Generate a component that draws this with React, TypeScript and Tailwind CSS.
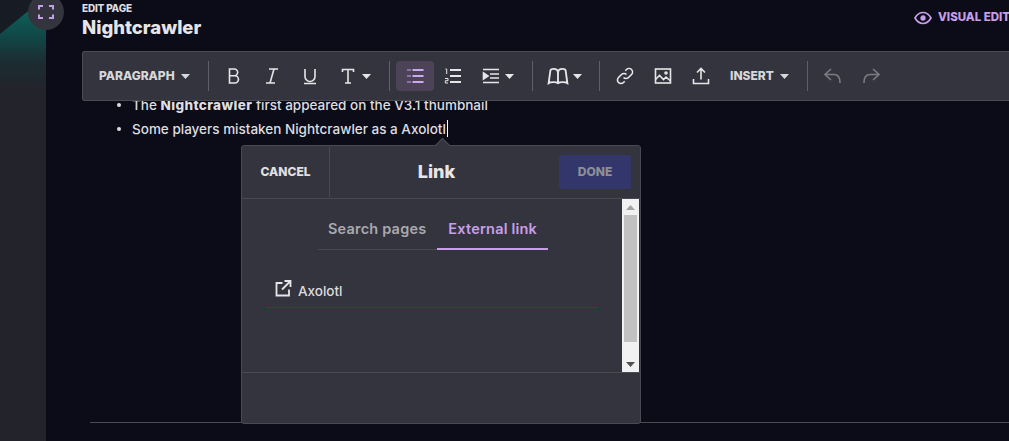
import type { ReactNode } from 'react'

function Caret({ className = '' }: { className?: string }) {
  return (
    <svg width="9" height="5" viewBox="0 0 9 5" className={className}>
      <path d="M0 0h9L4.500 5z" fill="currentColor" />
    </svg>
  )
}

function Divider() {
  return <div className="ml-[18px] mr-[6px] h-[30px] w-px shrink-0 bg-[#5f5f68]" />
}

function ToolIcon({ children, active = false }: { children: ReactNode; active?: boolean }) {
  return (
    <div className={active ? 'flex h-[30px] w-[38px] shrink-0 items-center justify-center rounded bg-[#4c4359] text-[#cfa6f0]' : 'flex h-[30px] w-[38px] shrink-0 items-center justify-center text-[#e6e6e8]'}>
      {children}
    </div>
  )
}

function Stroke({ children, size = 20 }: { children: ReactNode; size?: number }) {
  return (
    <svg width={size} height={size} viewBox="0 0 20 20" fill="none" stroke="currentColor" strokeWidth="1.600">
      {children}
    </svg>
  )
}

function Toolbar() {
  return (
    <div className="relative z-10 flex h-[50px] items-center rounded-l-[3px] border border-r-0 border-[#4a4a53] bg-[#34343e] pl-[16px] text-[#e6e6e8]">
      <div className="flex w-[91px] shrink-0 items-center justify-between text-[12px] font-extrabold text-[#d8d8da]">
        PARAGRAPH <Caret />
      </div>
      <Divider />
      <ToolIcon>
        <Stroke><path d="M5.500 3h4.800a3.200 3.200 0 0 1 0 6.700H5.500zM5.500 9.700h5.300a3.600 3.600 0 0 1 0 7.300H5.500z" /></Stroke>
      </ToolIcon>
      <ToolIcon>
        <Stroke><path d="M7 3h9M4 17h9M12 3L8 17" /></Stroke>
      </ToolIcon>
      <ToolIcon>
        <Stroke><path d="M5 3v7.500a5 5 0 0 0 10 0V3M4 17.500h12" /></Stroke>
      </ToolIcon>
      <ToolIcon>
        <Stroke><path d="M4.500 6V3.500h11V6M10 3.500V17M7 17h6" /></Stroke>
      </ToolIcon>
      <Caret className="-ml-[5px]" />
      <Divider />
      <ToolIcon active>
        <Stroke>
          <path d="M7.500 4h11M7.500 10h11M7.500 16h11" strokeWidth="2" />
          <path d="M2 4h4M2 10h4M2 16h4" strokeWidth="1" />
        </Stroke>
      </ToolIcon>
      <ToolIcon>
        <Stroke>
          <path d="M7 4h11M7 10h11M7 16h11" strokeWidth="2" />
          <path d="M2.500 3h1.200v5" strokeWidth="1" />
          <path d="M2 12.500h3v2.200H2.300V17H5" strokeWidth="1" />
        </Stroke>
      </ToolIcon>
      <ToolIcon>
        <Stroke>
          <path d="M2 3.500h16M9 8h9M9 12h9M2 16.500h16" />
          <path d="M2.500 7l4.500 3-4.500 3z" fill="currentColor" />
        </Stroke>
      </ToolIcon>
      <Caret className="-ml-[5px]" />
      <Divider />
      <div className="flex h-[30px] shrink-0 items-center gap-[4px] pl-[8px]">
        <Stroke size={22}>
          <path strokeWidth="1.700" d="M10 7C10 4.500 8 3.500 6 3.500S3 4.500 3 5.500L1.500 16.500C3 15.500 8 15 10 16.500 12 15 17 15.500 18.500 16.500L17 5.500C17 4.500 16 3.500 14 3.500S10 4.500 10 7V16.500" />
        </Stroke>
        <Caret />
      </div>
      <div className="ml-[17px] mr-[6px] h-[30px] w-px shrink-0 bg-[#5f5f68]" />
      <ToolIcon>
        <Stroke>
          <path d="M8.500 11.500a3.500 3.500 0 0 0 5 0l3-3a3.500 3.500 0 0 0-5-5l-1.200 1.200" />
          <path d="M11.500 8.500a3.500 3.500 0 0 0-5 0l-3 3a3.500 3.500 0 0 0 5 5l1.200-1.200" />
        </Stroke>
      </ToolIcon>
      <ToolIcon>
        <Stroke>
          <rect x="2.500" y="3" width="15" height="14" />
          <path d="M2.500 13.500l4-4 4 4 2.500-2.500 4.500 4" />
          <circle cx="13" cy="7" r="1" />
        </Stroke>
      </ToolIcon>
      <ToolIcon>
        <Stroke>
          <path d="M10 13.500V3M6 6.500L10 2.500l4 4M2.500 13v4.500h15V13" />
        </Stroke>
      </ToolIcon>
      <div className="ml-[10px] flex w-[59px] shrink-0 items-center justify-between text-[12px] font-extrabold text-[#d8d8da]">
        INSERT <Caret />
      </div>
      <Divider />
      <div className="flex h-[30px] w-[38px] shrink-0 items-center justify-center text-[#7b7b82]">
        <Stroke><path d="M8 3L2 8.500 8 14M2 8.500H11c4 0 6 3 6 8.500" /></Stroke>
      </div>
      <div className="flex h-[30px] w-[38px] shrink-0 items-center justify-center text-[#7b7b82]">
        <Stroke><path d="M12 3L18 8.500 12 14M18 8.500H9c-4 0-6 3-6 8.500" /></Stroke>
      </div>
    </div>
  )
}

function LinkDialog() {
  return (
    <div className="absolute left-[241px] top-[145px] flex h-[279px] w-[400px] flex-col rounded-[3px] border border-[#4a4a53] bg-[#34343e]">
      <div className="absolute -top-[6px] left-[195px] h-[11px] w-[11px] rotate-45 border-l border-t border-[#4a4a53] bg-[#34343e]" />
      <div className="relative flex h-[53px] items-center border-b border-[#4a4a53]">
        <div className="flex h-[50px] w-[88px] items-center justify-center border-r border-[#4a4a53] text-[12px] font-extrabold text-[#e0e0e2]">
          CANCEL
        </div>
        <div className="-mt-px flex-1 pr-[16px] text-center text-[18px] font-extrabold text-[#e6e6e8]">Link</div>
        <div className="mr-[9px] flex h-[34px] w-[72px] items-center justify-center rounded-[3px] bg-[#33366b] text-[12px] font-extrabold text-[#8f8f96]">
          DONE
        </div>
      </div>
      <div className="flex h-[173px]">
        <div className="flex-1 px-[24px]">
          <div className="mt-[19px] flex justify-center pl-[2px]">
            <div className="flex h-[32px] items-start border-b border-[#4a4a53] pl-[10px] text-[14.500px] font-semibold tracking-[0.2px]">
              <div className="pr-[11px] text-[#a9a9ae]">Search pages</div>
              <div className="-mb-px h-[32px] border-b-2 border-[#c79fe8] px-[11px] text-[#c79fe8]">External link</div>
            </div>
          </div>
          <div className="mt-[31px] flex h-[27px] items-start border-b border-[#8c1a2c] pl-[9px] text-[13.500px] font-medium text-[#dcdcde]">
            <svg width="17" height="17" viewBox="0 0 17 17" fill="none" stroke="#e6e6e8" strokeWidth="1.800" className="mr-[6px] mt-[-1px]">
              <path d="M7.500 3H1.500v12.500H14V9.500M9.500 1h6v6M15.500 1L7 9.500" />
            </svg>
            Axolotl
          </div>
        </div>
        <div className="mr-px flex w-[17px] flex-col items-center bg-[#f1f1f1]">
          <div className="flex h-[16px] items-center justify-center text-[#a3a3a3]">
            <Caret className="rotate-180" />
          </div>
          <div className="h-[127px] w-[13px] bg-[#c1c1c1]" />
          <div className="flex-1" />
          <div className="flex h-[16px] items-center justify-center text-[#505050]">
            <Caret />
          </div>
        </div>
      </div>
      <div className="flex-1 border-t border-[#4a4a53]" />
    </div>
  )
}

export default function App() {
  return (
    <div className="relative flex h-[441px] w-[1009px] overflow-hidden bg-[#0c0c18] font-['Inter','Liberation_Sans',sans-serif]">
      <div className="w-[46px] shrink-0 bg-[#22232b]">
        <svg width="46" height="90" viewBox="0 0 46 90" className="block">
          <defs>
            <linearGradient id="teal" x1="0" y1="0" x2="0" y2="1">
              <stop offset="0" stopColor="#0f6a62" />
              <stop offset="0.35" stopColor="#0f4c4a" />
              <stop offset="0.7" stopColor="#1c2c32" />
              <stop offset="1" stopColor="#22232b" />
            </linearGradient>
          </defs>
          <rect width="46" height="90" fill="url(#teal)" />
          <path d="M0 0h46v4L27 12 0 34z" fill="#171c24" />
        </svg>
      </div>
      <div className="absolute left-[28px] -top-[6px] flex h-[36px] w-[36px] items-center justify-center rounded-full bg-[#34343e] text-[#c79fe8]">
        <svg width="16" height="14" viewBox="0 0 16 14" fill="none" stroke="currentColor" strokeWidth="2">
          <path d="M1 4.500V1h4M11 1h4v3.500M15 9.500V13h-4M5 13H1V9.500" />
        </svg>
      </div>
      <div className="min-w-0 flex-1 pl-[36px]">
        <div className="flex h-[51px] justify-between">
          <div>
            <div className="pt-[3px] text-[10px] leading-[10px] font-extrabold tracking-[-0.2px] text-[#dedee0]">EDIT PAGE</div>
            <div className="mt-[2px] text-[18.500px] leading-[24px] font-extrabold text-[#e6e6e8]">Nightcrawler</div>
          </div>
          <div className="flex h-[36px] w-[95px] shrink-0 items-center gap-[6px] self-start overflow-hidden whitespace-nowrap text-[11.500px] font-extrabold text-[#c79fe8]">
            <svg width="18" height="14" viewBox="0 0 18 14" fill="none" stroke="currentColor" strokeWidth="1.700" className="shrink-0">
              <path d="M1 7c2-3.500 5-5.500 8-5.500S15 3.500 17 7c-2 3.500-5 5.500-8 5.500S3 10.500 1 7z" />
              <circle cx="9" cy="7" r="1.800" fill="currentColor" />
            </svg>
            VISUAL EDITOR
          </div>
        </div>
        <Toolbar />
        <ul className="-mt-[8px] ml-[50px] text-[13.500px] leading-[24px] font-medium text-[#dedee0]">
          <li className="relative">
            <span className="absolute -left-[15px] top-[10px] h-[4px] w-[4px] rounded-full bg-[#dedee0]" />
            The <b className="font-extrabold tracking-[0.4px]">Nightcrawler</b> first appeared on the V3.1 thumbnail
          </li>
          <li className="relative">
            <span className="absolute -left-[15px] top-[10px] h-[4px] w-[4px] rounded-full bg-[#dedee0]" />
            Some players mistaken Nightcrawler as a Axolotl
            <span className="ml-px inline-block h-[17px] w-px translate-y-[3px] bg-white" />
          </li>
        </ul>
        <div className="ml-[8px] mt-[281px] h-px bg-[#4a4a53]" />
      </div>
      <LinkDialog />
    </div>
  )
}
